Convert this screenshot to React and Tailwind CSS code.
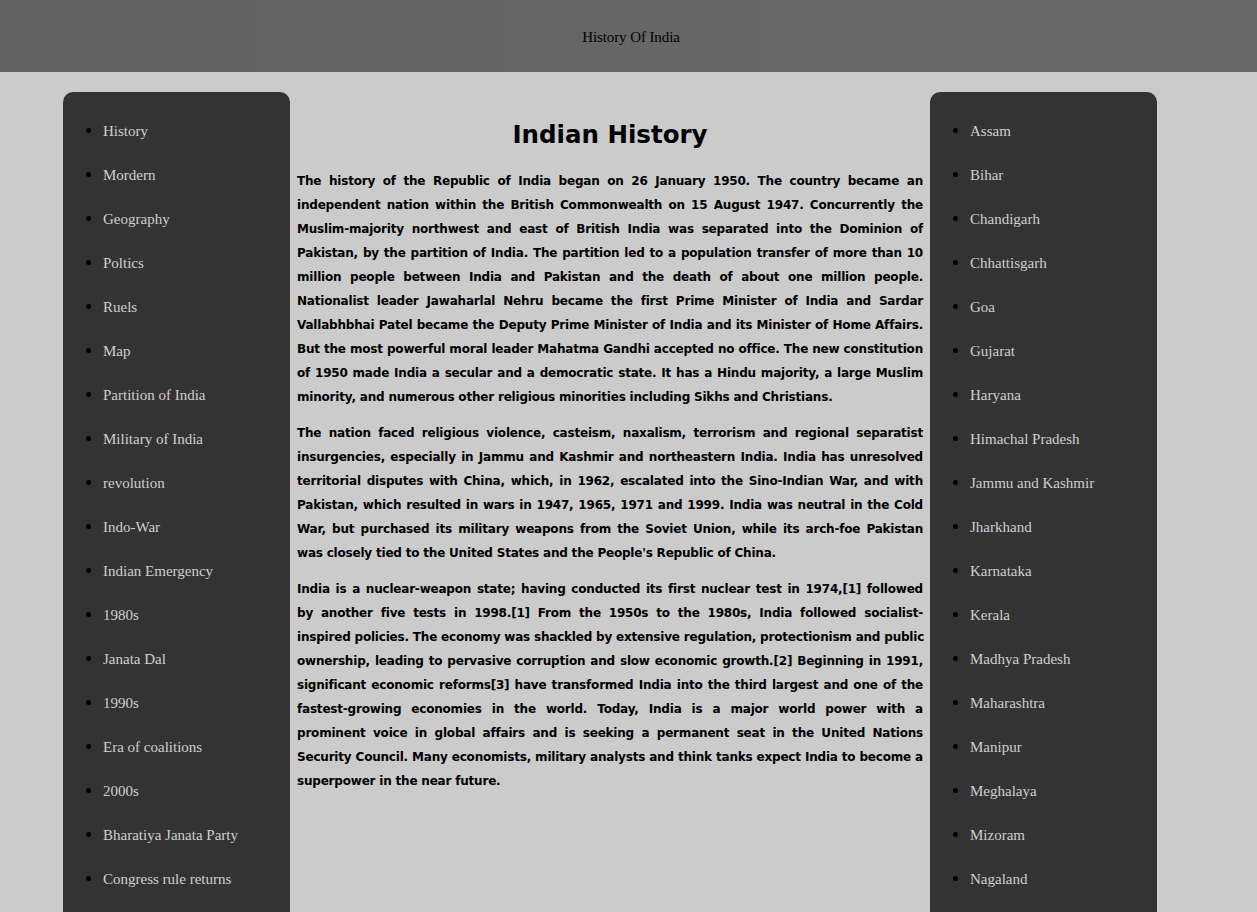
const leftLinks = [
  "History",
  "Mordern",
  "Geography",
  "Poltics",
  "Ruels",
  "Map",
  "Partition of India",
  "Military of India",
  "revolution",
  "Indo-War",
  "Indian Emergency",
  "1980s",
  "Janata Dal",
  "1990s",
  "Era of coalitions",
  "2000s",
  "Bharatiya Janata Party",
  "Congress rule returns",
];

const states = [
  "Assam",
  "Bihar",
  "Chandigarh",
  "Chhattisgarh",
  "Goa",
  "Gujarat",
  "Haryana",
  "Himachal Pradesh",
  "Jammu and Kashmir",
  "Jharkhand",
  "Karnataka",
  "Kerala",
  "Madhya Pradesh",
  "Maharashtra",
  "Manipur",
  "Meghalaya",
  "Mizoram",
  "Nagaland",
];

// lines kept as in the reference so the justified text breaks the same way
const paragraphs = [
  [
    "The history of the Republic of India began on 26 January 1950. The country became an",
    "independent nation within the British Commonwealth on 15 August 1947. Concurrently the",
    "Muslim-majority northwest and east of British India was separated into the Dominion of",
    "Pakistan, by the partition of India. The partition led to a population transfer of more than 10",
    "million people between India and Pakistan and the death of about one million people.",
    "Nationalist leader Jawaharlal Nehru became the first Prime Minister of India and Sardar",
    "Vallabhbhai Patel became the Deputy Prime Minister of India and its Minister of Home Affairs.",
    "But the most powerful moral leader Mahatma Gandhi accepted no office. The new constitution",
    "of 1950 made India a secular and a democratic state. It has a Hindu majority, a large Muslim",
    "minority, and numerous other religious minorities including Sikhs and Christians.",
  ],
  [
    "The nation faced religious violence, casteism, naxalism, terrorism and regional separatist",
    "insurgencies, especially in Jammu and Kashmir and northeastern India. India has unresolved",
    "territorial disputes with China, which, in 1962, escalated into the Sino-Indian War, and with",
    "Pakistan, which resulted in wars in 1947, 1965, 1971 and 1999. India was neutral in the Cold",
    "War, but purchased its military weapons from the Soviet Union, while its arch-foe Pakistan",
    "was closely tied to the United States and the People's Republic of China.",
  ],
  [
    "India is a nuclear-weapon state; having conducted its first nuclear test in 1974,[1] followed",
    "by another five tests in 1998.[1] From the 1950s to the 1980s, India followed socialist-",
    "inspired policies. The economy was shackled by extensive regulation, protectionism and public",
    "ownership, leading to pervasive corruption and slow economic growth.[2] Beginning in 1991,",
    "significant economic reforms[3] have transformed India into the third largest and one of the",
    "fastest-growing economies in the world. Today, India is a major world power with a",
    "prominent voice in global affairs and is seeking a permanent seat in the United Nations",
    "Security Council. Many economists, military analysts and think tanks expect India to become a",
    "superpower in the near future.",
  ],
];

function SideNav({ items }) {
  return (
    <aside className="w-[227px] shrink-0 rounded-t-[10px] bg-[#333333] pb-6 pt-[28px]">
      <ul className="list-disc pl-10 marker:text-[17px] marker:text-black">
        {items.map((item) => (
          <li key={item} className="mb-[22px] h-[22px] text-[15px] leading-[22px] text-[#cfcfcf]">
            <a href="#">{item}</a>
          </li>
        ))}
      </ul>
    </aside>
  );
}

export default function App() {
  return (
    <div className="min-h-screen bg-[#cbcbcb] font-['Liberation_Serif',serif]">
      <header className="flex h-[72px] items-center justify-center bg-gradient-to-r from-[#626262] to-[#6a6a6a] pt-[2px]">
        <h1 className="pl-[5px] text-[15px] tracking-[-0.1px] text-black">History Of India</h1>
      </header>

      <div className="ml-[63px] mt-5 flex w-[1094px] gap-[7px]">
        <SideNav items={leftLinks} />

        <main className="w-[626px] shrink-0 font-['DejaVu_Sans',Verdana,sans-serif] text-black">
          <h2 className="mt-[28px] text-center text-[24.5px] font-bold leading-[30px]">Indian History</h2>
          <div className="mt-[19px]">
            {paragraphs.map((lines, i) => (
              <p key={i} className="mb-3 text-[12px] font-bold leading-6 tracking-[-0.2px]">
                {lines.map((line, j) => (
                  <span
                    key={j}
                    className={
                      j === lines.length - 1
                        ? "block whitespace-nowrap text-left"
                        : "block whitespace-nowrap text-justify [text-align-last:justify]"
                    }
                  >
                    {line}
                  </span>
                ))}
              </p>
            ))}
          </div>
        </main>

        <SideNav items={states} />
      </div>
    </div>
  );
}
